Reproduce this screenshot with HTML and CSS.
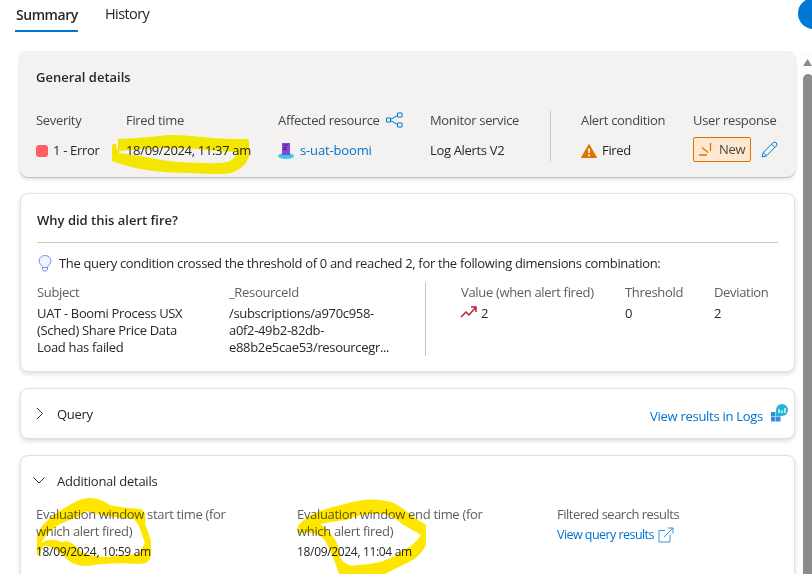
FILE: index.html
```html
<!DOCTYPE html>
<html lang="en">
<head>
    <meta charset="UTF-8">
    <meta name="viewport" content="width=device-width, initial-scale=1.0">
    <title>Alert details</title>
    <link rel="stylesheet" href="styles.css">
</head>
<body>

    <nav class="tabs">
        <a class="tab active">Summary</a>
        <a class="tab">History</a>
    </nav>
    <span class="fab"></span>

    <div class="panel">
        <main class="content">
            <section class="card general">
                <h2>General details</h2>
                <div class="general-grid">
                    <div class="field">
                        <div class="label">Severity</div>
                        <div class="value"><span class="severity-dot"></span>1 - Error</div>
                    </div>
                    <div class="field marked">
                        <svg class="mark mark-fired" width="140" height="46" viewBox="0 0 140 46">
                            <path fill-rule="evenodd" d="M7 9 Q30 8 48 6 62 4 80 6 108 9 122 9 H135 Q139 10 138 14 V26 Q135 38 120 43 112 45 80 43 50 43 30 39 14 36 1 31 V15 Q3 13 5 14 L6 20H7ZM8 21Q30 19 55 18 85 18 105 21L126 22Q125 28 119 31 110 34 95 33 65 33 45 29 30 26 8 23Z"/>
                        </svg>
                        <div class="label">Fired time</div>
                        <div class="value">18/09/2024, 11:37 am</div>
                    </div>
                    <div class="field">
                        <div class="label">Affected resource
                            <svg class="share" width="17" height="16" viewBox="0 0 17 16"><path d="M.5 6h4v4h-4zM11.500 1h4.500v4h-4.500zM11.500 11h4.500v4h-4.500zM4.500 7.500 11.500 3.500M4.500 8.500 11.500 12.500"/></svg>
                        </div>
                        <div class="value link">
                            <svg class="server" width="16" height="16" viewBox="0 0 16 16">
                                <ellipse cx="8" cy="13" rx="8" ry="3" fill="#3cc7ec"/>
                                <path d="M4 0h8v12H4z" fill="#8548d8"/>
                                <path d="M5.500 2h5M5.500 4.500h3M5.500 6.500h3" stroke="#3b1a80"/>
                            </svg>s-uat-boomi</div>
                    </div>
                    <div class="field">
                        <div class="label">Monitor service</div>
                        <div class="value">Log Alerts V2</div>
                    </div>
                    <div class="field divided">
                        <div class="label">Alert condition</div>
                        <div class="value">
                            <svg class="warning" width="16" height="14" viewBox="0 0 16 14">
                                <path d="M8 .5 15.500 13.500H.5z" fill="#db7500" stroke="#db7500" stroke-linejoin="round"/>
                                <path d="M8 4.500V9M8 10.500v1.700" stroke="#fff" stroke-width="1.700"/>
                            </svg>Fired</div>
                    </div>
                    <div class="field">
                        <div class="label">User response</div>
                        <div class="value response">
                            <span class="badge">
                                <svg width="13" height="13" viewBox="0 0 13 13"><path d="M0 12h8M3 4.500l6 5M11.500 0v8"/></svg>New
                            </span>
                            <svg class="pencil" width="17" height="17" viewBox="0 0 17 17"><path d="M1 16 2.200 11.500 11.800 1.900Q13.500.2 15.200 1.800 16.800 3.500 15.100 5.200L5.500 14.800ZM10.500 3.200l3.300 3.300M2.200 11.500l3.300 3.300"/></svg>
                        </div>
                    </div>
                </div>
            </section>

            <section class="card why">
                <h2>Why did this alert fire?</h2>
                <p class="reason">
                    <svg width="14" height="17" viewBox="0 0 14 17"><path d="M4.500 12.500C4.300 10 1 9.300 1 6a6 5.500 0 0 1 12 0c0 3.300-3.300 4-3.500 6.500zM4.500 12.500v2l1.200 1.500h2.600l1.200-1.500v-2z"/></svg>The query condition crossed the threshold of 0 and reached 2, for the following dimensions combination:
                </p>
                <div class="why-grid">
                    <div>
                        <div class="label">Subject</div>
                        <div>UAT - Boomi Process USX<br>(Sched) Share Price Data<br>Load has failed</div>
                    </div>
                    <div>
                        <div class="label">_ResourceId</div>
                        <div>/subscriptions/a970c958-<br>a0f2-49b2-82db-<br>e88b2e5cae53/resourcegr...</div>
                    </div>
                    <div class="divided">
                        <div class="label">Value (when alert fired)</div>
                        <div><svg class="trend" width="16" height="12" viewBox="0 0 16 12"><path d="M0 11 5 6l3 3 7-8M10 1h5v5"/></svg>2</div>
                    </div>
                    <div>
                        <div class="label">Threshold</div>
                        <div>0</div>
                    </div>
                    <div>
                        <div class="label">Deviation</div>
                        <div>2</div>
                    </div>
                </div>
            </section>

            <section class="card query">
                <svg class="chevron" width="12" height="12" viewBox="0 0 12 12"><path d="M3 0 8.500 5.500 3 11"/></svg>
                <span>Query</span>
                <a class="link logs">View results in Logs
                    <svg width="18" height="18" viewBox="0 0 18 18">
                        <path d="M1 8h4.500v4.500H1zM1 13h4.500v4.500H1zM6 13h4.500v4.500H6zM6 8h4.500v4.500H6z" fill="#2f8de4"/>
                        <path d="M6 12V6a6 6 0 1 1 6 6z" fill="#22b5d5"/>
                        <path d="M9 5v4M12 6.500V9M15 4v5" stroke="#fff" stroke-width="1.300"/>
                    </svg>
                </a>
            </section>

            <section class="card additional">
                <div class="additional-head">
                    <svg class="chevron" width="12" height="12" viewBox="0 0 12 12"><path d="M.5 2.500 6 8 11.500 2.500"/></svg>
                    <span>Additional details</span>
                </div>
                <div class="additional-grid">
                    <div class="marked">
                        <svg class="mark mark-start" width="118" height="74" viewBox="0 0 118 74">
                            <path fill-rule="evenodd" d="M1 62V44Q2 34 18 22 40 6 52 5 63 4 74 12 88 15 105 16 111 20 109 30L115 48V62Q114 71 103 71 75 69 52 73 38 73 32 67 24 58 12 53 5 51 4 62ZM5 50Q13 35 31 28 43 24 50 18 70 24 98 26L103 33 109 50 103 61Q90 61 75 64 50 64 42 56 34 46 26 49Q14 44 5 50Z"/>
                        </svg>
                        <div class="label">Evaluation window start time (for<br>which alert fired)</div>
                        <div class="value">18/09/2024, 10:59 am</div>
                    </div>
                    <div class="marked">
                        <svg class="mark mark-end" width="134" height="82" viewBox="0 0 134 82">
                            <path fill-rule="evenodd" d="M2 37V30Q12 16 45 9 75-1 98 7 107 12 115 19 122 24 130 29V49Q125 60 113 66 101 72 87 79L49 81Q42 80 41 72 37 60 31 48 25 34 2 37ZM24 28Q38 25 50 24 69 16 88 18 99 21 106 28L125 39Q118 50 103 57 89 68 61 69 50 72 44 61 43 41 24 28Z"/>
                        </svg>
                        <div class="label">Evaluation window end time (for<br>which alert fired)</div>
                        <div class="value">18/09/2024, 11:04 am</div>
                    </div>
                    <div>
                        <div class="label">Filtered search results</div>
                        <a class="link">View query results<svg class="external" width="16" height="16" viewBox="0 0 16 16"><path d="M7 3.500H1V15h11V8M9.500 1H15v5.500M15 1 6 10"/></svg></a>
                    </div>
                </div>
            </section>
        </main>

        <div class="scrollbar">
            <span class="arrow"></span>
            <span class="thumb"></span>
        </div>
    </div>

</body>
</html>
```
FILE: styles.css
```css
* {
    box-sizing: border-box;
}
body {
    margin: 0;
    height: 577px;
    overflow: hidden;
    position: relative;
    font-family: "Open Sans", "Noto Sans", sans-serif;
    font-size: 13px;
    line-height: 17px;
    letter-spacing: -0.33px;
    color: #292827;
    background-color: white;
}
svg {
    flex: none;
    overflow: visible;
    fill: none;
    stroke-width: 1;
}
h2 {
    margin: 0;
    font-size: 13px;
    line-height: 18px;
    font-weight: 600;
    letter-spacing: 0;
}
.tabs {
    display: flex;
    gap: 27px;
    height: 51px;
    padding-left: 15px;
}
.tab {
    height: 32px;
    padding-top: 5px;
    font-size: 14px;
    letter-spacing: -0.45px;
}
.tab:last-child {
    letter-spacing: -0.6px;
    font-size: 14.5px;
}
.tab.active {
    width: 63px;
    padding: 6px 0 0 1px;
    font-weight: 600;
    border-bottom: 2px solid #0078d4;
}
.fab {
    position: absolute;
    left: 798px;
    top: -2px;
    width: 31px;
    height: 31px;
    border-radius: 50%;
    background-color: #0078d4;
}
.panel {
    display: flex;
    height: 523px;
    overflow: hidden;
}
.content {
    width: 800px;
    padding: 0 5px 0 20px;
}
.card {
    border: 1px solid #e1e1e1;
    border-radius: 8px;
    background-color: white;
    box-shadow: 0 2px 4px rgba(0, 0, 0, 0.14);
    margin-bottom: 16px;
}
.link {
    color: #0072cf;
}
.general {
    height: 126px;
    padding: 16px 0 0 15px;
    border-color: #f3f2f1;
    background-color: #f3f2f1;
    box-shadow: 0 1px 1px rgba(0, 0, 0, 0.16), 0 2px 5px rgba(0, 0, 0, 0.14);
}
.general-grid {
    display: grid;
    grid-template-columns: 90px 152px 152px 120px 143px 100px;
    margin-top: 26px;
}
.general .label {
    display: flex;
    color: #484644;
}
.general .value {
    display: flex;
    align-items: center;
    height: 17px;
    margin-top: 13px;
}
.severity-dot {
    width: 12px;
    height: 12px;
    margin-right: 5px;
    border-radius: 3px;
    background-color: #ff5f61;
}
.share {
    margin-left: 6px;
    stroke: #0078d4;
}
.server {
    margin-right: 6px;
}
.general .link {
    letter-spacing: -0.15px;
}
.general .divided {
    height: 50px;
    margin-top: -1px;
    padding: 1px 0 0 30px;
    border-left: 1px solid #c8c6c4;
}
.warning {
    margin-right: 5px;
}
.badge {
    display: flex;
    align-items: center;
    width: 58px;
    height: 25px;
    margin-top: -2px;
    padding-left: 5px;
    gap: 7px;
    color: #484644;
    border: 1px solid #db7500;
    border-radius: 2px;
    background-color: #ffe8cf;
}
.badge svg {
    stroke: #db7500;
    stroke-width: 1.3;
}
.pencil {
    margin: -2px 0 0 10px;
    stroke: #0078d4;
}
.why {
    height: 179px;
    padding: 17px 16px 0;
}
.why h2 {
    padding-bottom: 14px;
    height: 32px;
    border-bottom: 1px solid #c8c6c4;
}
.reason {
    display: flex;
    align-items: center;
    gap: 7px;
    height: 17px;
    margin: 12px 0 12px 1px;
    white-space: nowrap;
}
.reason svg {
    stroke: #7b91ef;
    fill: #f0f4ff;
}
.why-grid {
    display: grid;
    grid-template-columns: 192px 196px 200px 89px 80px;
}
.why-grid .label {
    margin-bottom: 4px;
    color: #605e5c;
}
.why-grid .divided {
    margin-top: -2px;
    padding: 2px 0 0 35px;
    border-left: 1px solid #c8c6c4;
}
.trend {
    margin-right: 4px;
    stroke: #b91f2d;
    stroke-width: 1.5;
}
.query {
    display: flex;
    align-items: center;
    height: 51px;
    padding: 2px 6px 0 13px;
}
.chevron {
    margin: -2px 11px 0 0;
    stroke: #323130;
}
.logs {
    display: flex;
    align-items: center;
    gap: 7px;
    margin: 4px 0 0 auto;
    letter-spacing: -0.28px;
}
.logs svg {
    margin-top: -8px;
}
.additional {
    height: 140px;
    padding: 17px 0 0 12px;
}
.additional-head {
    display: flex;
    align-items: center;
    letter-spacing: -0.25px;
}
.additional-head .chevron {
    margin-right: 12px;
}
.additional-grid {
    display: grid;
    grid-template-columns: 261px 260px 180px;
    margin: 16px 0 0 3px;
}
.additional-grid .label {
    color: #605e5c;
}
.additional-grid .value {
    margin-top: 3px;
    font-size: 12px;
}
.additional-grid .link {
    display: flex;
    align-items: center;
    margin-top: 3px;
    font-size: 12.5px;
    letter-spacing: -0.55px;
}
.additional-grid > :last-child .label {
    letter-spacing: -0.5px;
}
.external {
    margin-left: 4px;
}
.external path {
    stroke: #3b93dc;
}
/* highlighter strokes over the dates */
.marked {
    position: relative;
}
.mark {
    position: absolute;
    fill: #ffe600;
    mix-blend-mode: multiply;
    pointer-events: none;
}
.mark-fired {
    left: -15px;
    top: 18px;
    fill: #fff300;
}
.mark-start {
    left: 0;
    top: -13px;
}
.mark-end {
    left: -1px;
    top: -10px;
}
.scrollbar {
    width: 12px;
    padding: 8px 0 0 3px;
    background-color: #fcfcfc;
}
.arrow {
    display: block;
    width: 9px;
    height: 7px;
    background-color: #8b8b8b;
    clip-path: polygon(50% 0, 100% 100%, 0 100%);
}
.thumb {
    display: block;
    width: 10px;
    height: 520px;
    margin-top: 8px;
    border-radius: 5px 5px 0 0;
    background-color: #8b8b8b;
}
```
